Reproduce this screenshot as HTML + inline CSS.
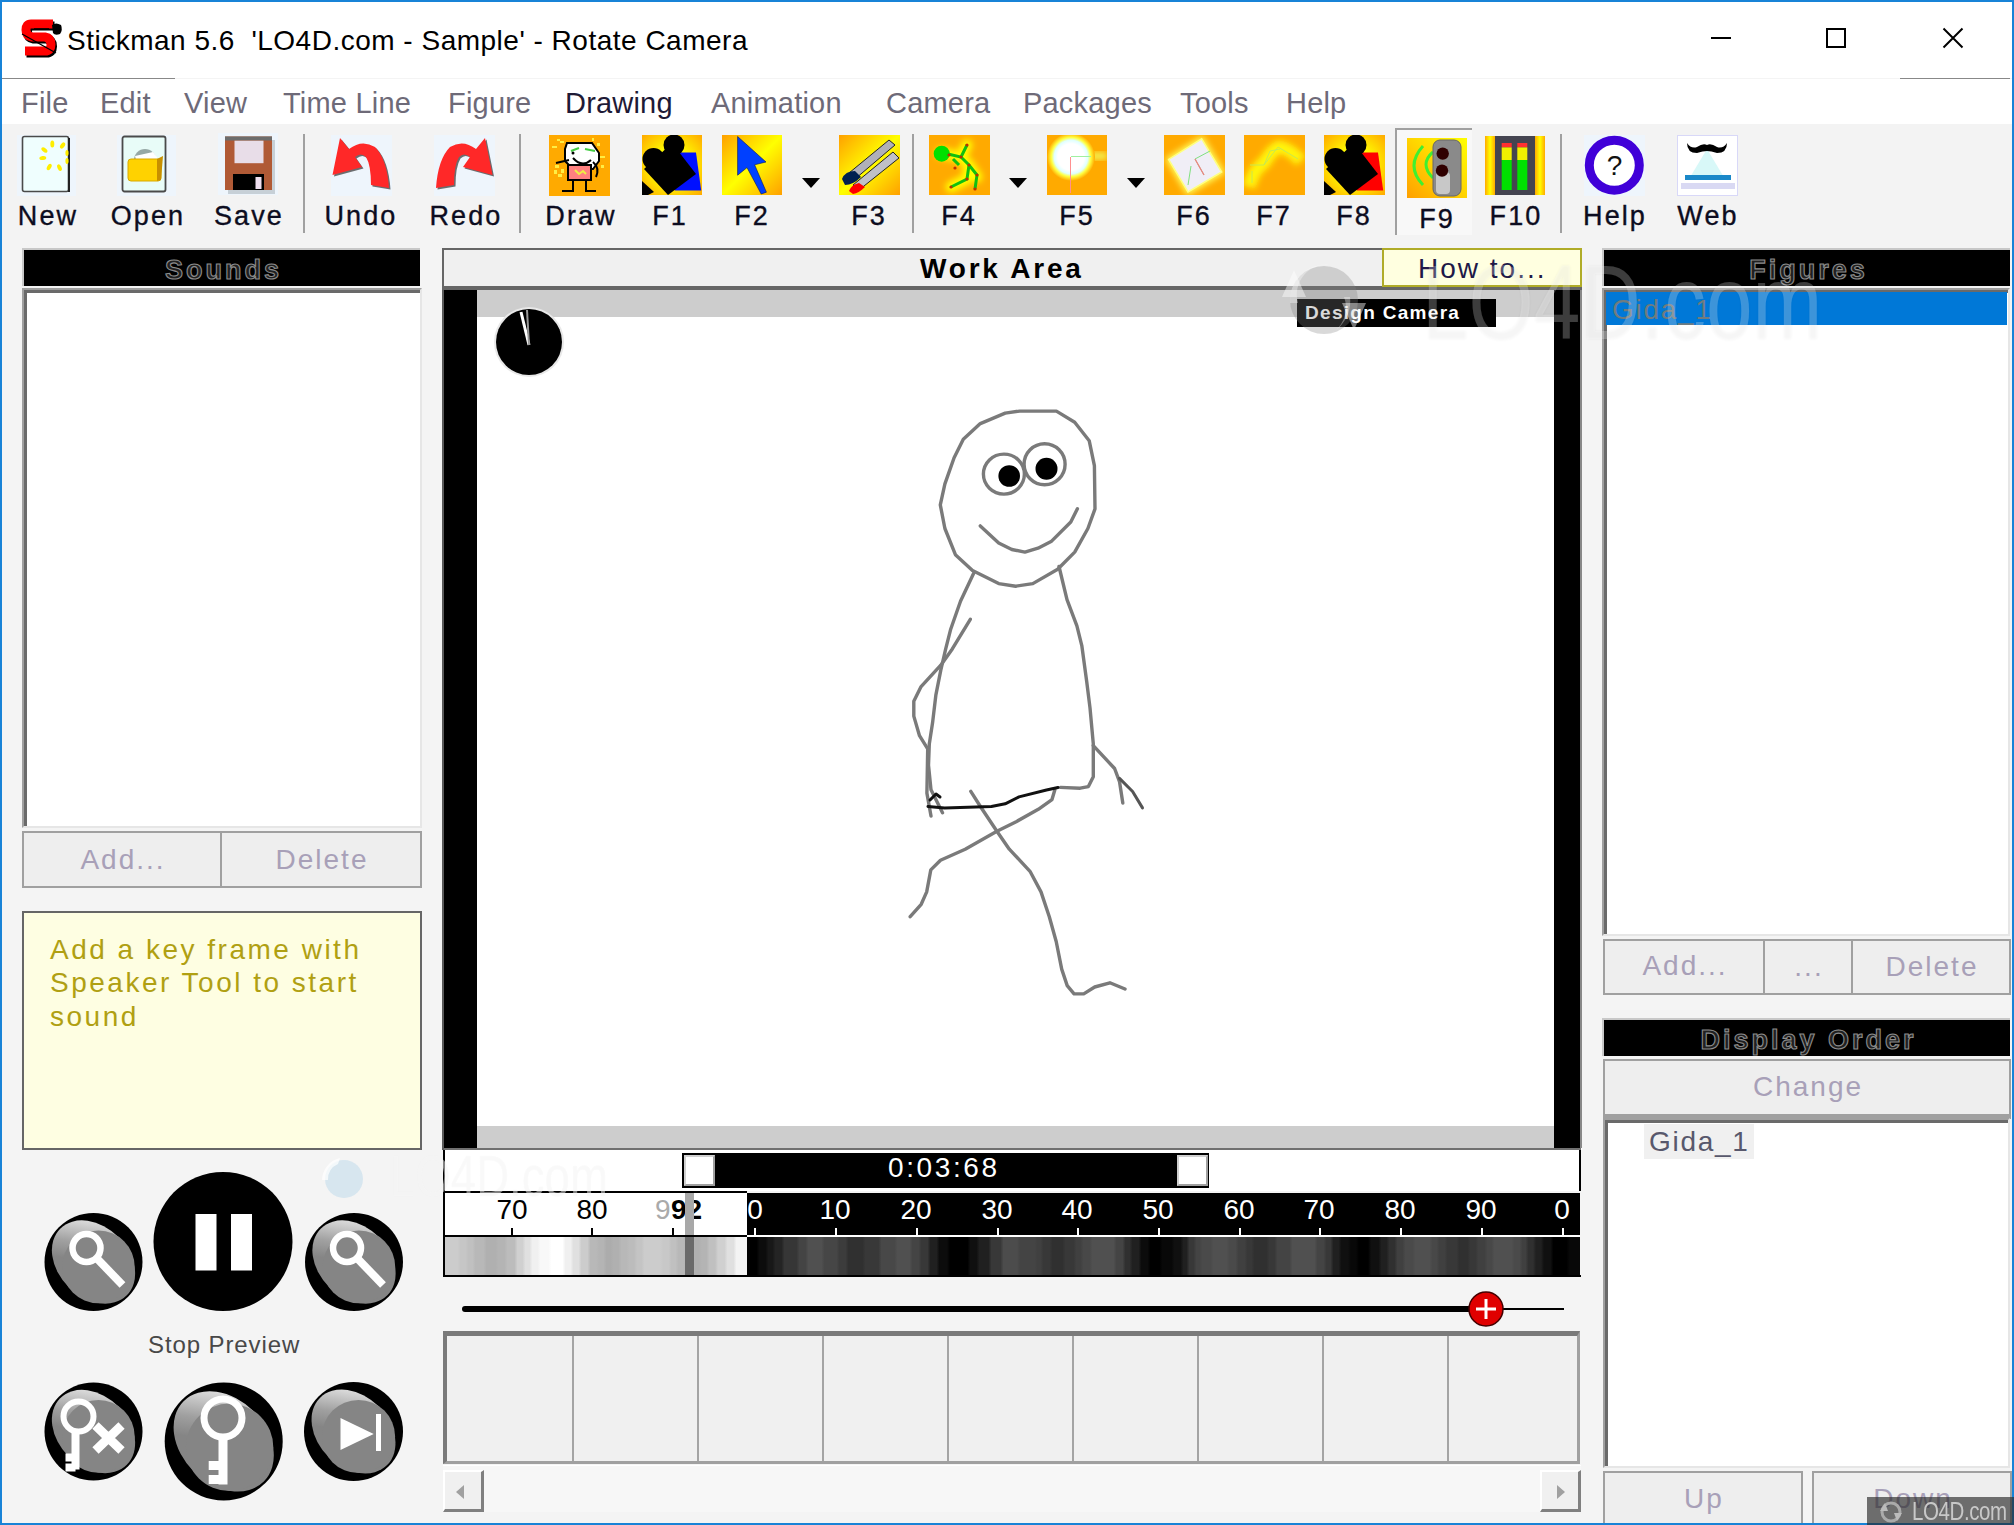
<!DOCTYPE html>
<html><head><meta charset="utf-8">
<style>
*{box-sizing:border-box;margin:0;padding:0}
html,body{width:2014px;height:1525px;overflow:hidden;background:#f4f4f4;font-family:"Liberation Sans",sans-serif;position:relative}
.a{position:absolute}
.t{position:absolute;white-space:nowrap;line-height:1}
.menu .t{color:#6e6a78;font-size:29px;top:89px;letter-spacing:0.2px}
.tl{color:#0c0c20;font-size:27px;top:203px;letter-spacing:2.1px;text-indent:2px;-webkit-text-stroke:0.35px #0c0c20}
.hdr{background:#000;border-top:2px solid #c8c8c8;border-left:2px solid #c8c8c8}
.hdrt{color:#202020;-webkit-text-stroke:1.1px #8c8c8c;font-size:27px;font-weight:bold;text-align:center;width:100%;top:7px;letter-spacing:3px;text-indent:3px}
.sunk{background:#fff;border-top:2px solid #a0a0a0;border-left:2px solid #a0a0a0;border-right:2px solid #e6e6e6;border-bottom:2px solid #e6e6e6;box-shadow:inset 3px 3px 0 #6a6a6a}
.btn{background:#eeeeee;border:2px solid #a0a0a0}
.btnt{color:#a8a0b8;font-size:28px;text-align:center;width:100%;letter-spacing:2px;text-indent:2px}
.ico{position:absolute;width:60px;height:59px}
</style></head><body>
<!-- window border -->
<div class="a" style="left:0;top:0;width:2014px;height:2px;background:#1883d7;z-index:5"></div>
<div class="a" style="left:0;top:0;width:2px;height:1525px;background:#1883d7;z-index:5"></div>
<div class="a" style="left:2012px;top:0;width:2px;height:1525px;background:#1883d7;z-index:5"></div>
<div class="a" style="left:0;top:1523px;width:2014px;height:2px;background:#1883d7;z-index:5"></div>

<!-- title bar -->
<div class="a" style="left:2px;top:2px;width:2010px;height:76px;background:#fff"></div>
<div class="t" style="left:67px;top:27px;font-size:28px;color:#000;letter-spacing:0.5px">Stickman 5.6&nbsp; 'LO4D.com - Sample' - Rotate Camera</div>
<div class="a" style="left:1711px;top:37px;width:20px;height:2px;background:#000"></div>
<div class="a" style="left:1826px;top:28px;width:20px;height:20px;border:2px solid #000"></div>
<svg class="a" style="left:1942px;top:27px" width="22" height="22"><path d="M1.5 1.5L20.5 20.5M20.5 1.5L1.5 20.5" stroke="#000" stroke-width="2"/></svg>
<div class="a" style="left:2px;top:78px;width:173px;height:1px;background:#888"></div>
<div class="a" style="left:1900px;top:78px;width:110px;height:1px;background:#888"></div>

<!-- menu -->
<div class="a menu" style="left:2px;top:79px;width:2010px;height:45px;background:#fff">
</div>
<div class="menu">
<div class="t" style="left:21px">File</div>
<div class="t" style="left:100px">Edit</div>
<div class="t" style="left:184px">View</div>
<div class="t" style="left:283px">Time Line</div>
<div class="t" style="left:448px">Figure</div>
<div class="t" style="left:565px;color:#1e1a36">Drawing</div>
<div class="t" style="left:711px">Animation</div>
<div class="t" style="left:886px">Camera</div>
<div class="t" style="left:1023px">Packages</div>
<div class="t" style="left:1180px">Tools</div>
<div class="t" style="left:1286px">Help</div>
</div>

<!-- toolbar -->
<div class="a" style="left:2px;top:124px;width:2010px;height:116px;background:#f3f3f3"></div>
<div id="tb">
<!-- New -->
<div class="a" style="left:17px;top:135px;width:59px;height:61px;background:#eef5fc"></div>
<svg class="a" style="left:17px;top:130px" width="64" height="70">
<rect x="5.5" y="6.5" width="46" height="55" rx="2" fill="#effefe" stroke="#4a4a4a" stroke-width="1.6"/>
<rect x="51" y="8" width="2" height="54" fill="#222"/>
<g fill="#ffee00">
<ellipse cx="35.3" cy="14" rx="2" ry="3.5"/><ellipse cx="45.6" cy="15.5" rx="2" ry="3.5" transform="rotate(35 45.6 15.5)"/>
<ellipse cx="27.4" cy="20" rx="2" ry="3.5" transform="rotate(-50 27.4 20)"/><ellipse cx="25.8" cy="28" rx="2" ry="3.5" transform="rotate(80 25.8 28)"/>
<ellipse cx="32.2" cy="37" rx="2" ry="3.5" transform="rotate(30 32.2 37)"/><ellipse cx="42.5" cy="37.7" rx="2" ry="3.5" transform="rotate(-25 42.5 37.7)"/>
<ellipse cx="50" cy="23" rx="1.6" ry="3"/><ellipse cx="50" cy="31" rx="1.6" ry="3"/>
</g></svg>
<!-- Open -->
<div class="a" style="left:117px;top:135px;width:59px;height:61px;background:#eef5fc"></div>
<svg class="a" style="left:117px;top:130px" width="64" height="70">
<rect x="5.5" y="6.5" width="43" height="55" rx="2" fill="#e8fcf8" stroke="#4a4a4a" stroke-width="1.8"/>
<path d="M17 30 A11 11 0 0 1 39 30 Z" fill="#96a8a6"/>
<path d="M18 26 L36 22 L42 30 L20 33Z" fill="#fff"/>
<rect x="11" y="29" width="33" height="22" rx="3" fill="#ffd200" stroke="#d8a800" stroke-width="1"/>
<path d="M40 29 L46 26 L44 50 L40 51Z" fill="#c89000"/>
</svg>
<!-- Save -->
<div class="a" style="left:218px;top:133px;width:60px;height:62px;background:#eef5fc"></div>
<svg class="a" style="left:218px;top:130px" width="64" height="70">
<rect x="10" y="10" width="47" height="54" fill="#a8b0b8" opacity="0.55"/>
<rect x="7" y="6.5" width="47" height="53.5" fill="#b05a36"/>
<rect x="7" y="6.5" width="47" height="4" fill="#6c6c6c"/>
<rect x="16.5" y="10.7" width="29" height="22.5" fill="#e8dde8"/>
<rect x="15" y="44" width="31" height="16" fill="#000"/>
<rect x="37.5" y="47" width="6" height="12" fill="#f0e0f0"/>
</svg>
<div class="a" style="left:303px;top:134px;width:2px;height:99px;background:#a0a0a0"></div>
<!-- Undo -->
<div class="a" style="left:331px;top:135px;width:61px;height:61px;background:#eef5fc"></div>
<svg class="a" style="left:331px;top:135px" width="64" height="64">
<path transform="translate(1.5,1.5)" d="M9,3 L18,14 Q31,4 44,12 Q56,24 58,53 L40,50 Q40,30 35,22 Q30,17 24,22 L31,32 L1.5,40 Z" fill="#333" opacity="0.7"/>
<path d="M9,3 L18,14 Q31,4 44,12 Q56,24 58,53 L40,50 Q40,30 35,22 Q30,17 24,22 L31,32 L1.5,40 Z" fill="#ff2828"/>
</svg>
<!-- Redo -->
<div class="a" style="left:434px;top:135px;width:61px;height:61px;background:#eef5fc"></div>
<svg class="a" style="left:434px;top:135px" width="64" height="64">
<g transform="translate(60,0) scale(-1,1)">
<path transform="translate(-1.5,1.5)" d="M9,3 L18,14 Q31,4 44,12 Q56,24 58,53 L40,50 Q40,30 35,22 Q30,17 24,22 L31,32 L1.5,40 Z" fill="#333" opacity="0.7"/>
<path d="M9,3 L18,14 Q31,4 44,12 Q56,24 58,53 L40,50 Q40,30 35,22 Q30,17 24,22 L31,32 L1.5,40 Z" fill="#ff2828"/>
</g></svg>
<div class="a" style="left:519px;top:134px;width:2px;height:99px;background:#a0a0a0"></div>
<!-- Draw -->
<svg class="a" style="left:549px;top:135px" width="61" height="61">
<rect width="61" height="61" fill="#ffaa00"/>
<g fill="#ffee44"><rect x="8" y="4" width="3" height="2"/><rect x="11" y="6" width="4" height="2"/><rect x="3" y="11" width="5" height="2"/><rect x="43" y="3" width="2" height="3"/><rect x="48" y="8" width="3" height="3"/><rect x="50" y="21" width="6" height="2"/><rect x="52" y="30" width="3" height="3"/><path d="M6 30h4v3h-4zM5 35h3v4h-3zM9 39h4v3h-4zM12 34h3v4h-3z"/></g>
<path d="M18 8 H43 L50 18 V26 L44 34 H24 L16 26 V14Z" fill="#fff" stroke="#000" stroke-width="2"/>
<path d="M22 16 L30 13 M36 14 L46 16" stroke="#4c4" stroke-width="2"/>
<circle cx="24" cy="18" r="1.5" fill="#000"/><path d="M24 23 Q33 33 42 25" stroke="#000" stroke-width="2" fill="none"/>
<rect x="19" y="30" width="23" height="15" fill="#ff8080" stroke="#000" stroke-width="2"/>
<path d="M26 35 l4 4 l4-3 l3 3" stroke="#ee4" stroke-width="2" fill="none"/>
<path d="M7 28 L20 25 M44 27 Q51 33 47 42 M24 45 V56 H13 M37 45 V56 H47" stroke="#000" stroke-width="2" fill="none"/>
</svg>
<!-- F1 -->
<svg class="a" style="left:642px;top:135px" width="60" height="60">
<defs><radialGradient id="g1" cx="50%" cy="50%" r="75%"><stop offset="0.35" stop-color="#ffff00"/><stop offset="1" stop-color="#ffa000"/></radialGradient>
<linearGradient id="g2" x1="0" y1="0" x2="1" y2="1"><stop offset="0" stop-color="#ffa000"/><stop offset="0.5" stop-color="#ffff00"/><stop offset="1" stop-color="#ffa000"/></linearGradient></defs>
<rect width="60" height="60" fill="url(#g1)"/>
<path d="M20.4 17.5 L54 17.5 L59.2 55.4 L33 55.4Z" fill="#0010ff"/>
<circle cx="32" cy="10" r="10.5" fill="#000"/><circle cx="11.5" cy="24" r="11" fill="#000"/>
<path d="M30 8 L54 39 L26 60 L2 34Z" fill="#000"/><path d="M0 46 L12 57 L6 60 L0 60Z" fill="#000"/>
</svg>
<!-- F2 -->
<svg class="a" style="left:722px;top:135px" width="60" height="60">
<rect width="60" height="60" fill="url(#g2)"/>
<path d="M15.6,1.5 L44,27 L32.6,29.8 L44.4,57.2 L39.2,59 L25,32.6 L15.6,40.2 Z" fill="#0040ff" stroke="#001060" stroke-width="0.6"/>
</svg>
<svg class="a" style="left:801px;top:177px" width="20" height="12"><path d="M1 1H19L10 11Z" fill="#000"/></svg>
<!-- F3 -->
<svg class="a" style="left:839px;top:135px" width="61" height="60">
<rect width="61" height="60" fill="url(#g2)"/>
<path d="M10 38 L50 5 L56 10 L16 44Z" fill="#b0b0b8" stroke="#222" stroke-width="1"/>
<path d="M14 50 L54 17 L60 23 L20 55Z" fill="#c0c0c8" stroke="#222" stroke-width="1"/>
<path d="M3 44 Q6 36 16 36 L22 42 Q14 50 6 50Z" fill="#002050"/>
<path d="M10 56 Q12 50 20 48 L26 52 Q20 58 14 59Z" fill="#ff0000"/>
</svg>
<div class="a" style="left:912px;top:134px;width:2px;height:99px;background:#a0a0a0"></div>
<!-- F4 -->
<svg class="a" style="left:929px;top:135px" width="61" height="60">
<defs><filter id="bl" x="-30%" y="-30%" width="160%" height="160%"><feGaussianBlur stdDeviation="3"/></filter></defs>
<rect width="61" height="60" fill="#ffaa00"/>
<g filter="url(#bl)" stroke="#ffff00" stroke-width="11" fill="none" stroke-linecap="round"><path d="M12 18 L32 22 L40 30 L48 42 M32 22 L38 10 M40 30 L38 44 L22 52"/></g>
<circle cx="12.7" cy="18.7" r="8" fill="#00e000"/>
<g stroke="#10c010" stroke-width="3" fill="none"><path d="M19 19 L32 22 L40 30 L48 40 L46 54 M32 22 L38 10 M30 30 L24 24 M40 30 L38 44 L22 52"/></g>
<g fill="#c03000"><circle cx="20" cy="20" r="1.6"/><circle cx="32" cy="22" r="1.6"/><circle cx="38" cy="10" r="1.6"/><circle cx="40" cy="30" r="1.6"/><circle cx="48" cy="40" r="1.6"/><circle cx="46" cy="54" r="1.6"/><circle cx="38" cy="44" r="1.6"/><circle cx="22" cy="52" r="1.6"/><circle cx="26" cy="33" r="1.6"/></g>
</svg>
<svg class="a" style="left:1008px;top:177px" width="20" height="12"><path d="M1 1H19L10 11Z" fill="#000"/></svg>
<!-- F5 -->
<svg class="a" style="left:1047px;top:135px" width="60" height="60">
<defs><radialGradient id="g5"><stop offset="0.55" stop-color="#fff"/><stop offset="0.7" stop-color="#e0ffff"/><stop offset="0.82" stop-color="#ffff40"/><stop offset="1" stop-color="#ffaa00"/></radialGradient></defs>
<rect width="60" height="60" fill="#ffaa00"/>
<rect x="28" y="18" width="32" height="6" fill="#f0ff60" filter="url(#bl)"/>
<circle cx="24" cy="22" r="24" fill="url(#g5)"/>
<path d="M23.5 22 V58" stroke="#ff9090" stroke-width="1"/><path d="M24 21.5 H44" stroke="#a0f0a0" stroke-width="1"/>
</svg>
<svg class="a" style="left:1126px;top:177px" width="20" height="12"><path d="M1 1H19L10 11Z" fill="#000"/></svg>
<!-- F6 -->
<svg class="a" style="left:1164px;top:135px" width="61" height="60">
<rect width="61" height="60" fill="#ffaa00"/>
<path d="M37.7,3.8 L57.7,37 L24,57 L4.6,24.4Z" fill="#ffff60" stroke="#ffff60" stroke-width="5" stroke-linejoin="round" filter="url(#bl)"/>
<path d="M37.7,3.8 L57.7,37 L24,57 L4.6,24.4Z" fill="#f0eef6" stroke="#ffff80" stroke-width="1.5"/>
<path d="M31 24 L46 16 M31 24 L40 40 M27 31 L24 50" stroke="#80e080" stroke-width="1"/><path d="M31 24 L40 40" stroke="#f08080" stroke-width="1.2"/>
</svg>
<!-- F7 -->
<svg class="a" style="left:1244px;top:135px" width="61" height="60">
<rect width="61" height="60" fill="#ffaa00"/>
<path d="M5 52 Q10 34 20 28 Q30 12 36 12 Q46 14 57 26" stroke="#ffff10" stroke-width="13" fill="none" filter="url(#bl)" opacity="0.9"/>
<path d="M6 30 L20 30 L34 12 L54 24 M8 36 L8 48 M20 30 L26 16 L36 14" stroke="#c8e850" stroke-width="1" fill="none"/>
</svg>
<!-- F8 -->
<svg class="a" style="left:1324px;top:135px" width="61" height="60">
<rect width="61" height="60" fill="url(#g1)"/>
<path d="M20.4 17.5 L54 17.5 L59.2 55.4 L33 55.4Z" fill="#ff0000"/>
<circle cx="32" cy="10" r="10.5" fill="#000"/><circle cx="11.5" cy="24" r="11" fill="#000"/>
<path d="M30 8 L54 39 L26 60 L2 34Z" fill="#000"/><path d="M0 46 L12 57 L6 60 L0 60Z" fill="#000"/>
</svg>
<!-- F9 pressed -->
<div class="a" style="left:1395px;top:128px;width:77px;height:107px;background:#f8f8f8;border-top:2px solid #a0a0a0;border-left:2px solid #a0a0a0"></div>
<svg class="a" style="left:1407px;top:138px" width="60" height="60">
<defs><linearGradient id="g9" x1="0" y1="1" x2="1" y2="0"><stop offset="0" stop-color="#ffa000"/><stop offset="0.6" stop-color="#ffdd00"/><stop offset="1" stop-color="#ffff00"/></linearGradient></defs>
<rect width="60" height="60" fill="url(#g9)"/>
<path d="M16 47 Q-2 28 16 8" stroke="#40f030" stroke-width="3" fill="none"/><path d="M26 40 Q12 26 26 14" stroke="#40f030" stroke-width="3" fill="none"/>
<rect x="26" y="2" width="28" height="56" rx="7" fill="#8a8a8a" stroke="#666" stroke-width="1"/>
<rect x="29" y="34" width="14" height="22" rx="4" fill="#c8c8c8"/>
<circle cx="35.7" cy="15.6" r="6.2" fill="#300000"/><circle cx="35" cy="32.6" r="6.2" fill="#300000"/>
</svg>
<!-- F10 -->
<svg class="a" style="left:1485px;top:136px" width="60" height="59">
<defs><linearGradient id="g10" x1="0" x2="1"><stop offset="0" stop-color="#ffaa00"/><stop offset="0.5" stop-color="#ffff00"/><stop offset="1" stop-color="#ffaa00"/></linearGradient></defs>
<rect width="10" height="59" fill="url(#g10)"/><rect x="50" width="10" height="59" fill="url(#g10)"/>
<rect x="10" width="40" height="59" fill="#444450"/>
<rect x="16.7" y="7" width="10" height="4.4" fill="#ff3030"/><rect x="16.7" y="11.4" width="10" height="12.6" fill="#f0f000"/><rect x="16.7" y="24" width="10" height="30" fill="#00e000"/>
<rect x="32.3" y="7" width="10" height="4.4" fill="#ff3030"/><rect x="32.3" y="11.4" width="10" height="12.6" fill="#f0f000"/><rect x="32.3" y="24" width="10" height="30" fill="#00e000"/>
</svg>
<div class="a" style="left:1560px;top:134px;width:2px;height:99px;background:#a0a0a0"></div>
<!-- Help -->
<div class="a" style="left:1584px;top:135px;width:61px;height:61px;background:#eef5fc"></div>
<svg class="a" style="left:1584px;top:135px" width="61" height="61">
<circle cx="30.3" cy="30.2" r="25" fill="#fff" stroke="#4000d8" stroke-width="9"/>
<text x="30.5" y="40" font-family="Liberation Sans" font-size="28" text-anchor="middle" fill="#111">?</text>
</svg>
<!-- Web -->
<svg class="a" style="left:1677px;top:135px" width="61" height="61">
<rect x="0.5" y="0.5" width="60" height="60" fill="#fff" stroke="#d8d8f8" stroke-width="1"/>
<path d="M30 44 L12 44 L30 14 L48 44Z" fill="#d8f8f8"/>
<rect x="4" y="48" width="54" height="6" fill="#d0d0f0" opacity="0.8"/>
<path d="M10 8 Q14 14 20 12 Q26 8 30 10 Q34 8 40 12 Q46 14 50 8 Q50 18 40 18 Q34 16 30 16 Q26 16 20 18 Q10 18 10 8Z" fill="#000"/>
<rect x="8" y="40" width="46" height="5" fill="#1a88c8"/>
</svg>
<!-- labels -->
<div class="t tl" style="left:-13px;width:120px;text-align:center">New</div>
<div class="t tl" style="left:87px;width:120px;text-align:center">Open</div>
<div class="t tl" style="left:188px;width:120px;text-align:center">Save</div>
<div class="t tl" style="left:300px;width:120px;text-align:center">Undo</div>
<div class="t tl" style="left:405px;width:120px;text-align:center">Redo</div>
<div class="t tl" style="left:520px;width:120px;text-align:center">Draw</div>
<div class="t tl" style="left:609px;width:120px;text-align:center">F1</div>
<div class="t tl" style="left:691px;width:120px;text-align:center">F2</div>
<div class="t tl" style="left:808px;width:120px;text-align:center">F3</div>
<div class="t tl" style="left:898px;width:120px;text-align:center">F4</div>
<div class="t tl" style="left:1016px;width:120px;text-align:center">F5</div>
<div class="t tl" style="left:1133px;width:120px;text-align:center">F6</div>
<div class="t tl" style="left:1213px;width:120px;text-align:center">F7</div>
<div class="t tl" style="left:1293px;width:120px;text-align:center">F8</div>
<div class="t tl" style="left:1376px;width:120px;text-align:center;top:206px">F9</div>
<div class="t tl" style="left:1455px;width:120px;text-align:center">F10</div>
<div class="t tl" style="left:1554px;width:120px;text-align:center">Help</div>
<div class="t tl" style="left:1647px;width:120px;text-align:center">Web</div>
</div>


<!-- left panel: Sounds -->
<div class="a hdr" style="left:22px;top:248px;width:398px;height:38px"><div class="t hdrt">Sounds</div></div>
<div class="a sunk" style="left:22px;top:288px;width:400px;height:540px"></div>
<div class="a btn" style="left:22px;top:831px;width:200px;height:57px"><div class="t btnt" style="top:13px">Add...</div></div>
<div class="a btn" style="left:220px;top:831px;width:202px;height:57px"><div class="t btnt" style="top:13px">Delete</div></div>
<div class="a" style="left:22px;top:911px;width:400px;height:239px;background:#fefee2;border:2px solid #666"></div>
<div class="t" style="left:50px;top:933px;font-size:28px;line-height:33.4px;color:#b0a012;white-space:normal;width:380px;letter-spacing:2.5px">Add a key frame with<br>Speaker Tool to start<br>sound</div>

<!-- work area -->
<div class="a" style="left:442px;top:248px;width:1140px;height:42px;background:#f0f0f0;border:2px solid #666;border-bottom:4px solid #666"></div>
<div class="t" style="left:920px;top:255px;font-size:28px;font-weight:bold;color:#000;letter-spacing:2.8px">Work Area</div>
<div class="a" style="left:1382px;top:248px;width:200px;height:39px;background:#ffffe0;border:2px solid #b0ac28"></div>
<div class="t" style="left:1418px;top:255px;font-size:28px;color:#201848;letter-spacing:2px">How to...</div>

<div class="a" style="left:444px;top:290px;width:1138px;height:860px;background:#fff"></div>
<div class="a" style="left:444px;top:290px;width:33px;height:858px;background:#000"></div>
<div class="a" style="left:442px;top:290px;width:2px;height:860px;background:#5a5a5a"></div>
<div class="a" style="left:1554px;top:290px;width:26px;height:858px;background:#000"></div>
<div class="a" style="left:1580px;top:290px;width:2px;height:858px;background:#888"></div>
<div class="a" style="left:477px;top:290px;width:1077px;height:27px;background:#cdcdcd"></div>
<div class="a" style="left:477px;top:1126px;width:1077px;height:22px;background:#cdcdcd"></div>

<svg class="a" style="left:0;top:0" width="2014" height="1525">
<g fill="none" stroke="#7a7a7a" stroke-width="3.4" stroke-linejoin="round" stroke-linecap="round">
<path d="M1019.7,411.1 L1056.4,411.1 L1074.7,422.3 L1089.2,440.7 L1094.4,465.6 L1095,508.8 L1087.9,528.5 L1074.7,552.1 L1057.7,569.2 L1032.8,583.6 L1015.7,586.2 L998.7,583.6 L972.5,570.5 L955.4,554.7 L944.9,528.5 L940.3,504.9 L944.9,483.9 L954.1,457.7 L963.3,439.3 L980.3,423.6 L1005.2,413.1 Z"/>
<ellipse cx="1003.9" cy="474.1" rx="20.5" ry="20"/>
<ellipse cx="1044.6" cy="464.3" rx="20.5" ry="20.5"/>
<path d="M980.3,525.9 L998.7,542.9 L1011.8,549.5 L1024.9,552.1 L1038,548.2 L1051.1,541.6 L1070.8,522 L1077.4,508.8"/>
<path d="M973.8,573.1 L960.5,601.3 L950.7,629.2 L945.7,648.9 L940.8,670.2 L935.9,694.8 L932.6,722.6 L929.3,743.9 L928.5,765.2 L931,789.8 L942.5,812.8"/>
<path d="M970.3,619.3 L952.3,648.9 L940.8,665.2 L921.1,686.6 L913.8,701.3 L913.8,716.1 L919.5,735.7 L927.7,748.9 L926.9,793.1 L931,816"/>
<path d="M1059,566.5 L1067,599.7 L1076.9,625.9 L1081.8,645.6 L1086.7,681.6 L1090,707.9 L1093.3,743.9 L1093.3,776.7 L1088.4,786.6 L1080.2,788.2 L1060.5,787.4"/>
<path d="M1093.3,745.6 L1114.6,768.5 L1119.5,781.6 L1122.8,803"/>
<path d="M1054.8,790 L1052,799.6 L1038.3,809.3 L1016.2,821.7 L996.9,831.3 L965.2,849.2 L940.5,860.2 L930.8,869.9 L926.7,891.9 L921.2,904.3 L910.2,916.7"/>
<path d="M970.8,791.4 L980.4,806.5 L996.9,831.3 L1009.3,849.2 L1030,871.3 L1041,891.9 L1049.3,916.7 L1056.2,941.5 L1061.7,969.1 L1067.2,985.6 L1074.1,993.9 L1083.7,993.9 L1094.7,987 L1109.9,982.8 L1125,989"/>
</g>
<g fill="none" stroke="#111" stroke-width="3" stroke-linejoin="round" stroke-linecap="round">
<path d="M928,806.5 L944.6,807.9 L991.4,806.5 L1005.2,803.8 L1019,796.9 L1046.5,790 L1058,787.5"/>
<path d="M1119.5,778.4 L1132.6,791.5 L1142.5,807.9" stroke="#555"/>
<path d="M930,800 L936,794 L940,797"/>
</g>
<circle cx="1009.2" cy="476" r="10.8" fill="#000"/>
<circle cx="1046.5" cy="468.8" r="11" fill="#000"/>
<!-- clock -->
<circle cx="529" cy="342" r="35" fill="#e8e8e8"/>
<circle cx="529" cy="342" r="33" fill="#000"/>
<path d="M529,345 L521,312" stroke="#fff" stroke-width="3"/>
<path d="M529,345 L527,310" stroke="#999" stroke-width="2"/>
</svg>
<div class="a" style="left:1297px;top:299px;width:199px;height:28px;background:#000"></div>
<div class="t" style="left:1305px;top:303px;font-size:19px;font-weight:bold;color:#fff;letter-spacing:1.3px">Design Camera</div>

<!-- timeline -->
<div class="a" style="left:444px;top:1148px;width:1137px;height:2px;background:#707070"></div>
<div class="a" style="left:443px;top:1150px;width:2px;height:127px;background:#000"></div>
<div class="a" style="left:445px;top:1150px;width:1135px;height:41px;background:#fff"></div>
<div class="a" style="left:1579px;top:1150px;width:2px;height:41px;background:#000"></div>
<div class="a" style="left:682px;top:1153px;width:527px;height:35px;background:#000"></div>
<div class="a" style="left:684px;top:1155px;width:31px;height:31px;background:#fff;border:2px solid #a0a0a0;border-top-color:#d0d0d0;border-left-color:#d0d0d0"></div>
<div class="a" style="left:1177px;top:1155px;width:31px;height:31px;background:#fff;border:2px solid #a0a0a0;border-top-color:#d0d0d0;border-left-color:#d0d0d0"></div>
<div class="t" style="left:888px;top:1154px;font-size:28px;color:#fff;letter-spacing:2.6px">0:03:68</div>
<!-- ruler -->
<div class="a" style="left:445px;top:1191px;width:302px;height:2px;background:#000"></div>
<div class="a" style="left:445px;top:1193px;width:302px;height:42px;background:#fff"></div>
<div class="a" style="left:747px;top:1193px;width:833px;height:42px;background:#000"></div>
<div class="a" style="left:445px;top:1235px;width:302px;height:2px;background:#000"></div>
<div class="a" style="left:747px;top:1235px;width:833px;height:2px;background:#fff"></div>
<div id="ruler"><div class="a" style="left:511px;top:1228px;width:2px;height:7px;background:#000"></div><div class="t" style="left:452px;width:120px;text-align:center;top:1196px;font-size:28px;color:#000">70</div><div class="a" style="left:591px;top:1228px;width:2px;height:7px;background:#000"></div><div class="t" style="left:532px;width:120px;text-align:center;top:1196px;font-size:28px;color:#000">80</div><div class="a" style="left:672px;top:1228px;width:2px;height:7px;background:#000"></div><div class="t" style="left:655px;top:1196px;font-size:28px;color:#aaa">9</div><div class="t" style="left:671px;top:1196px;font-size:28px;font-weight:bold;color:#000">92</div><div class="a" style="left:754px;top:1228px;width:2px;height:7px;background:#fff"></div><div style="position:absolute;left:747px;top:1193px;width:20px;height:40px;overflow:hidden"><div class="t" style="left:-52px;width:120px;text-align:center;top:3px;font-size:28px;color:#fff">0</div></div><div class="a" style="left:835px;top:1228px;width:2px;height:7px;background:#fff"></div><div class="t" style="left:775px;width:120px;text-align:center;top:1196px;font-size:28px;color:#fff">10</div><div class="a" style="left:916px;top:1228px;width:2px;height:7px;background:#fff"></div><div class="t" style="left:856px;width:120px;text-align:center;top:1196px;font-size:28px;color:#fff">20</div><div class="a" style="left:997px;top:1228px;width:2px;height:7px;background:#fff"></div><div class="t" style="left:937px;width:120px;text-align:center;top:1196px;font-size:28px;color:#fff">30</div><div class="a" style="left:1077px;top:1228px;width:2px;height:7px;background:#fff"></div><div class="t" style="left:1017px;width:120px;text-align:center;top:1196px;font-size:28px;color:#fff">40</div><div class="a" style="left:1158px;top:1228px;width:2px;height:7px;background:#fff"></div><div class="t" style="left:1098px;width:120px;text-align:center;top:1196px;font-size:28px;color:#fff">50</div><div class="a" style="left:1239px;top:1228px;width:2px;height:7px;background:#fff"></div><div class="t" style="left:1179px;width:120px;text-align:center;top:1196px;font-size:28px;color:#fff">60</div><div class="a" style="left:1319px;top:1228px;width:2px;height:7px;background:#fff"></div><div class="t" style="left:1259px;width:120px;text-align:center;top:1196px;font-size:28px;color:#fff">70</div><div class="a" style="left:1400px;top:1228px;width:2px;height:7px;background:#fff"></div><div class="t" style="left:1340px;width:120px;text-align:center;top:1196px;font-size:28px;color:#fff">80</div><div class="a" style="left:1481px;top:1228px;width:2px;height:7px;background:#fff"></div><div class="t" style="left:1421px;width:120px;text-align:center;top:1196px;font-size:28px;color:#fff">90</div><div class="a" style="left:1562px;top:1228px;width:2px;height:7px;background:#fff"></div><div class="t" style="left:1502px;width:120px;text-align:center;top:1196px;font-size:28px;color:#fff">0</div></div>
<div class="a" style="left:445px;top:1237px;width:302px;height:38px;background:linear-gradient(90deg,#cccccc 1.5px,#cccccc 12.5px,#c6c6c6 15.5px,#c6c6c6 20.5px,#c0c0c0 23.5px,#c0c0c0 27.5px,#b8b8b8 30.5px,#b8b8b8 38.5px,#b0b0b0 41.5px,#b0b0b0 50.5px,#b4b4b4 53.5px,#b4b4b4 59.5px,#bcbcbc 62.5px,#bcbcbc 69.5px,#d0d0d0 72.5px,#d0d0d0 77.5px,#e0e0e0 80.5px,#e0e0e0 84.5px,#f0f0f0 87.5px,#f0f0f0 92.5px,#f8f8f8 95.5px,#f8f8f8 103.5px,#ffffff 106.5px,#ffffff 117.5px,#f0f0f0 120.5px,#f0f0f0 125.5px,#e0e0e0 128.5px,#e0e0e0 133.5px,#cccccc 136.5px,#cccccc 142.5px,#b8b8b8 145.5px,#b8b8b8 151.1px,#b4b4b4 154.1px,#b4b4b4 158.5px,#acacac 161.5px,#acacac 165.5px,#b0b0b0 168.5px,#b0b0b0 173.5px,#b8b8b8 176.5px,#b8b8b8 181.5px,#bcbcbc 184.5px,#bcbcbc 189.1px,#c4c4c4 192.1px,#c4c4c4 196.5px,#cccccc 199.5px,#cccccc 215.2px,#c8c8c8 218.2px,#c8c8c8 223.5px,#c0c0c0 226.5px,#c0c0c0 230.5px,#b8b8b8 233.5px,#b8b8b8 238.0px,#b4b4b4 241.0px,#b4b4b4 247.5px,#b0b0b0 250.5px,#b0b0b0 254.0px,#b4b4b4 257.0px,#b4b4b4 261.5px,#c0c0c0 264.5px,#c0c0c0 270.1px,#d0d0d0 273.1px,#d0d0d0 279.5px,#e0e0e0 282.5px,#e0e0e0 288.5px,#f4f4f4 291.5px,#f4f4f4 300.5px)"></div>
<div class="a" style="left:747px;top:1237px;width:833px;height:38px;background:linear-gradient(90deg,#000000 1.5px,#000000 9.5px,#0c0c0c 12.5px,#0c0c0c 18.5px,#181818 21.5px,#181818 25.5px,#242424 28.5px,#242424 34.5px,#363636 37.5px,#363636 49.5px,#444444 52.5px,#444444 58.5px,#505050 61.5px,#505050 74.5px,#464646 77.5px,#464646 89.5px,#3c3c3c 92.5px,#3c3c3c 98.5px,#303030 101.5px,#303030 115.5px,#383838 118.5px,#383838 131.5px,#484848 134.5px,#484848 147.5px,#505050 150.5px,#505050 162.5px,#444444 165.5px,#444444 171.5px,#383838 174.5px,#383838 180.5px,#202020 183.5px,#202020 189.5px,#0c0c0c 192.5px,#0c0c0c 200.0px,#000000 203.0px,#000000 220.5px,#101010 223.5px,#101010 229.5px,#202020 232.5px,#202020 241.5px,#383838 244.5px,#383838 253.5px,#4c4c4c 256.5px,#4c4c4c 270.1px,#444444 273.1px,#444444 287.5px,#404040 290.5px,#404040 293.5px,#383838 296.5px,#383838 302.5px,#303030 305.5px,#303030 315.5px,#383838 318.5px,#383838 326.5px,#404040 329.5px,#404040 333.5px,#484848 336.5px,#484848 342.5px,#505050 345.5px,#505050 366.5px,#444444 369.5px,#444444 375.5px,#303030 378.5px,#303030 382.5px,#202020 385.5px,#202020 391.5px,#0c0c0c 394.5px,#0c0c0c 400.5px,#000000 403.5px,#000000 412.5px,#080808 415.5px,#080808 424.5px,#101010 427.5px,#101010 433.5px,#202020 436.5px,#202020 439.5px,#383838 442.5px,#383838 446.5px,#444444 449.5px,#444444 452.5px,#4a4a4a 455.5px,#4a4a4a 463.5px,#505050 466.5px,#505050 479.5px,#4a4a4a 482.5px,#4a4a4a 488.5px,#404040 491.5px,#404040 497.5px,#383838 500.5px,#383838 504.5px,#303030 507.5px,#303030 519.5px,#383838 522.5px,#383838 527.5px,#444444 530.5px,#444444 542.5px,#505050 545.5px,#505050 567.5px,#444444 570.5px,#444444 576.5px,#383838 579.5px,#383838 583.5px,#202020 586.5px,#202020 591.5px,#101010 594.5px,#101010 601.0px,#080808 604.0px,#080808 609.0px,#000000 612.0px,#000000 621.1px,#101010 624.1px,#101010 631.5px,#202020 634.5px,#202020 639.5px,#303030 642.5px,#303030 647.5px,#404040 650.5px,#404040 655.5px,#4a4a4a 658.5px,#4a4a4a 665.5px,#505050 668.5px,#505050 682.5px,#484848 685.5px,#484848 689.5px,#404040 692.5px,#404040 697.5px,#383838 700.5px,#383838 709.5px,#303030 712.5px,#303030 720.5px,#383838 723.5px,#383838 728.5px,#404040 731.5px,#404040 737.5px,#484848 740.5px,#484848 744.5px,#505050 747.5px,#505050 764.5px,#4a4a4a 767.5px,#4a4a4a 772.5px,#404040 775.5px,#404040 778.5px,#303030 781.5px,#303030 786.0px,#202020 789.0px,#202020 794.0px,#101010 797.0px,#101010 803.5px,#000000 806.5px,#000000 819.5px,#080808 822.5px,#080808 831.5px)"></div>
<div class="a" style="left:685px;top:1193px;width:9px;height:42px;background:#a8a8a8"></div>
<div class="a" style="left:685px;top:1237px;width:9px;height:38px;background:#6a6a6a"></div>
<div class="a" style="left:443px;top:1275px;width:1138px;height:2px;background:#000"></div>
<!-- slider -->
<div class="a" style="left:462px;top:1306px;width:1030px;height:6px;background:#000;border-radius:3px"></div>
<div class="a" style="left:1490px;top:1308px;width:74px;height:2px;background:#000"></div>
<svg class="a" style="left:1466px;top:1289px" width="40" height="40"><circle cx="20" cy="20" r="17" fill="#e00000" stroke="#400" stroke-width="1.5"/><path d="M20 10V30M10 20H30" stroke="#fff" stroke-width="3"/></svg>
<!-- keyframe grid -->
<div class="a" style="left:443px;top:1331px;width:1137px;height:133px;background:#f0f0f0;border-top:5px solid #7a7a7a;border-left:4px solid #7a7a7a;border-bottom:3px solid #a0a0a0;border-right:3px solid #a0a0a0"></div>
<div id="grid"><div class="a" style="left:572px;top:1336px;width:2px;height:125px;background:#a4a4a4"></div><div class="a" style="left:697px;top:1336px;width:2px;height:125px;background:#a4a4a4"></div><div class="a" style="left:822px;top:1336px;width:2px;height:125px;background:#a4a4a4"></div><div class="a" style="left:947px;top:1336px;width:2px;height:125px;background:#a4a4a4"></div><div class="a" style="left:1072px;top:1336px;width:2px;height:125px;background:#a4a4a4"></div><div class="a" style="left:1197px;top:1336px;width:2px;height:125px;background:#a4a4a4"></div><div class="a" style="left:1322px;top:1336px;width:2px;height:125px;background:#a4a4a4"></div><div class="a" style="left:1447px;top:1336px;width:2px;height:125px;background:#a4a4a4"></div></div>
<div class="a" style="left:443px;top:1465px;width:1138px;height:47px;background:#f7f7f7;border-top:1px solid #fff"></div>
<div class="a" style="left:443px;top:1470px;width:41px;height:42px;background:#f0f0f0;border-top:2px solid #fff;border-left:2px solid #fff;border-right:3px solid #808080;border-bottom:3px solid #808080"></div>
<svg class="a" style="left:452px;top:1482px" width="16" height="20"><path d="M4 10L12 3V17Z" fill="#a0a0a0"/></svg>
<div class="a" style="left:1540px;top:1470px;width:41px;height:42px;background:#f0f0f0;border-top:2px solid #fff;border-left:2px solid #fff;border-right:3px solid #808080;border-bottom:3px solid #808080"></div>
<svg class="a" style="left:1553px;top:1482px" width="16" height="20"><path d="M12 10L4 3V17Z" fill="#a0a0a0"/></svg>

<!-- right panel -->
<div class="a hdr" style="left:1602px;top:248px;width:408px;height:38px"><div class="t hdrt">Figures</div></div>
<div class="a sunk" style="left:1602px;top:288px;width:408px;height:648px"></div>
<div class="a" style="left:1606px;top:292px;width:401px;height:33px;background:#0078d7"></div>
<div class="t" style="left:1612px;top:296px;font-size:28px;color:#707c80;letter-spacing:1.7px">Gida_1</div>
<div class="a btn" style="left:1603px;top:939px;width:162px;height:56px"><div class="t btnt" style="top:11px">Add...</div></div>
<div class="a btn" style="left:1763px;top:939px;width:90px;height:56px"><div class="t btnt" style="top:12px">...</div></div>
<div class="a btn" style="left:1851px;top:939px;width:160px;height:56px"><div class="t btnt" style="top:12px">Delete</div></div>
<div class="a hdr" style="left:1602px;top:1018px;width:408px;height:38px"><div class="t hdrt">Display Order</div></div>
<div class="a btn" style="left:1603px;top:1059px;width:408px;height:60px;border-bottom:5px solid #a0a0a0"><div class="t btnt" style="top:12px">Change</div></div>
<div class="a sunk" style="left:1603px;top:1118px;width:407px;height:350px"></div>
<div class="a" style="left:1644px;top:1124px;width:110px;height:35px;background:#f0f0f0"></div>
<div class="t" style="left:1649px;top:1128px;font-size:28px;color:#58586c;letter-spacing:1.7px">Gida_1</div>
<div class="a btn" style="left:1603px;top:1471px;width:200px;height:56px;border-bottom:0"><div class="t btnt" style="top:12px">Up</div></div>
<div class="a btn" style="left:1812px;top:1471px;width:200px;height:56px;border-bottom:0"><div class="t btnt" style="top:12px">Down</div></div>

<!-- title icon -->
<svg class="a" style="left:0;top:0" width="70" height="70">
<path d="M53 24 H31 Q26 24 26 30 Q26 36 32 37 H45 Q51 38 51 44.5 Q51 51 45 51 H25" stroke="#000" stroke-width="9" fill="none" transform="translate(1.5,2)"/>
<path d="M53 24 H31 Q26 24 26 30 Q26 36 32 37 H45 Q51 38 51 44.5 Q51 51 45 51 H25" stroke="#ff0000" stroke-width="9" fill="none"/>
<path d="M34 29 H49" stroke="#000" stroke-width="1.5"/>
<path d="M22,34 L56,53" stroke="#000" stroke-width="1.3"/>
<path d="M52,25 Q56,22 61,25 Q63,30 60,34 Q55,36 53,33 Z" fill="#000"/>
</svg>
<!-- control buttons -->
<svg class="a" style="left:0;top:1150px" width="440" height="373">
<defs><linearGradient id="hl2" x1="0" y1="0" x2="1" y2="1"><stop offset="0.1" stop-color="#e8e8e8"/><stop offset="0.35" stop-color="#a0a0a0"/><stop offset="0.5" stop-color="#858585"/></linearGradient></defs>
<g transform="translate(93.5,112)">
<circle r="49" fill="#000"/>
<ellipse rx="47.1" ry="35.3" transform="rotate(45)" fill="url(#hl2)"/>
<circle cx="4.9" cy="4.9" r="36.3" fill="#858585"/>
<circle cx="-7" cy="-14" r="14" fill="none" stroke="#fff" stroke-width="6.5"/><path d="M3 -4 L29 23" stroke="#fff" stroke-width="8"/>
</g>
<circle cx="223" cy="91.5" r="69.5" fill="#000"/><rect x="195.5" y="64" width="21" height="56.5" fill="#fff"/><rect x="231" y="64" width="21" height="56.5" fill="#fff"/>
<g transform="translate(354,112)">
<circle r="49" fill="#000"/>
<ellipse rx="47.1" ry="35.3" transform="rotate(45)" fill="url(#hl2)"/>
<circle cx="4.9" cy="4.9" r="36.3" fill="#858585"/>
<circle cx="-7" cy="-14" r="14" fill="none" stroke="#fff" stroke-width="6.5"/><path d="M3 -4 L29 23" stroke="#fff" stroke-width="8"/>
</g>
<g transform="translate(93.5,281.5)">
<circle r="49" fill="#000"/>
<ellipse rx="47.1" ry="35.3" transform="rotate(45)" fill="url(#hl2)"/>
<circle cx="4.9" cy="4.9" r="36.3" fill="#858585"/>
<circle cx="-15" cy="-15" r="15" fill="none" stroke="#fff" stroke-width="6"/><path d="M-18 0 V38 M-28 26 H-18 M-28 36 H-18" stroke="#fff" stroke-width="8"/><path d="M2 -6 L28 19 M28 -6 L2 19" stroke="#fff" stroke-width="9"/>
</g>
<g transform="translate(223.7,291.4)">
<circle r="59" fill="#000"/>
<ellipse rx="56.7" ry="42.5" transform="rotate(45)" fill="url(#hl2)"/>
<circle cx="5.9" cy="5.9" r="43.7" fill="#858585"/>
<circle cx="-0.7" cy="-23.4" r="19" fill="none" stroke="#fff" stroke-width="7"/><path d="M-0.7 -4 V43 M-15 24 H-0.7 M-15 38 H-0.7" stroke="#fff" stroke-width="9"/>
</g>
<g transform="translate(353.5,281.5)">
<circle r="49.5" fill="#000"/>
<ellipse rx="47.5" ry="35.6" transform="rotate(45)" fill="url(#hl2)"/>
<circle cx="5.0" cy="5.0" r="36.6" fill="#858585"/>
<path d="M-13 -13.5 L-13 18.5 L20.2 2.5Z" fill="#fff"/><rect x="22.5" y="-17.5" width="5" height="37" fill="#fff"/>
</g>
</svg>
<div class="t" style="left:148px;top:1333px;font-size:24px;color:#484848;letter-spacing:0.9px">Stop Preview</div>
<!-- watermarks -->
<svg class="a" style="left:1262px;top:245px" width="120" height="115">
<circle cx="62" cy="55" r="34" fill="#808080" opacity="0.3"/>
<path d="M28 58 A36 36 0 0 1 70 20 A30 30 0 0 0 36 58 Z" fill="#fff" opacity="0.35"/>
<path d="M20 52 L32 25 L44 52 Z" fill="#fff" opacity="0.45"/>
<path d="M104 58 L92 85 L80 58 Z" fill="#fff" opacity="0.45"/>
<path d="M88 52 A36 36 0 0 1 48 92 A30 30 0 0 0 82 52 Z" fill="#fff" opacity="0.35"/>
</svg>
<div class="t" style="left:1422px;top:249px;font-size:106px;color:rgba(255,255,255,0.24);transform:scaleX(0.79);transform-origin:0 0;text-shadow:0 0 3px rgba(0,0,0,0.05)">LO4D.com</div>
<svg class="a" style="left:300px;top:1150px" width="90" height="60">
<circle cx="44" cy="29" r="19" fill="#cfe2ee" opacity="0.8"/>
<path d="M22 30 A23 23 0 0 1 40 8 L38 14 A16 16 0 0 0 28 30Z" fill="#fff" opacity="0.7"/>
</svg>
<div class="t" style="left:390px;top:1148px;font-size:57px;color:rgba(255,255,255,0.5);transform:scaleX(0.8);transform-origin:0 0;text-shadow:0 0 1px rgba(0,0,0,0.05)">LO4D.com</div>
<div class="a" style="left:1867px;top:1497px;width:147px;height:28px;background:rgba(40,40,40,0.65);z-index:6"></div>
<svg class="a" style="left:1876px;top:1499px;z-index:7" width="30" height="26"><circle cx="15" cy="13" r="9" fill="none" stroke="#aaa" stroke-width="3"/><path d="M4 12 L9 4 L12 12Z M26 14 L21 22 L18 14Z" fill="#bbb"/></svg>
<div class="t" style="z-index:7;left:1912px;top:1499px;font-size:25px;color:#c8c8c8;transform:scaleX(0.82);transform-origin:0 0;letter-spacing:-0.5px">LO4D.com</div>

</body></html>
